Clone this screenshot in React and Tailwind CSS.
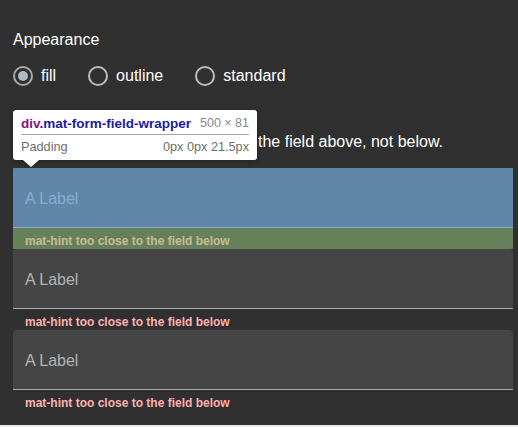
import React from "react";

function Radio({ label, checked }) {
  return (
    <div className="flex items-center">
      <div
        className={
          "w-[20px] h-[20px] rounded-full border-2 flex items-center justify-center " +
          (checked ? "border-[#a9a9a9]" : "border-[#bdbdbd]")
        }
      >
        {checked && <div className="w-[10px] h-[10px] rounded-full bg-[#aebcc6]" />}
      </div>
      <span className="ml-[8px] text-white text-[16px] leading-[20px]">{label}</span>
    </div>
  );
}

function Field({ highlighted }) {
  return (
    <div className="relative h-[81px] w-[500px]">
      <div className="h-[59px] bg-[#454545] rounded-t-[4px] px-[12px] pt-[3px] flex items-center">
        <span className="text-[16px] text-[#b3b3b3]">A Label</span>
      </div>
      <div className="h-px bg-[#ababab]" />
      <div className="h-[21px] px-[12px] pt-[6px]">
        <span className="block text-[12px] leading-[14px] font-bold text-[#ffb0b0]">
          mat-hint too close to the field below
        </span>
      </div>
      {highlighted && (
        <>
          <div className="absolute left-0 top-0 w-full h-[60px] bg-[rgba(111,168,220,0.66)]" />
          <div className="absolute left-0 top-[60px] w-full h-[21px] bg-[rgba(147,196,125,0.55)]" />
        </>
      )}
    </div>
  );
}

export default function App() {
  return (
    <div
      className="w-[518px] h-[427px] bg-[#303030] flex flex-col overflow-hidden"
      style={{ fontFamily: '"Liberation Sans", Arial, sans-serif' }}
    >
      <div className="relative flex-1 px-[13px] pt-[30px]">
        <div className="text-white text-[16px] leading-[20px]">Appearance</div>
        <div className="mt-[16px] flex items-center gap-[32px]">
          <Radio label="fill" checked />
          <Radio label="outline" />
          <Radio label="standard" />
        </div>
        <div className="mt-[46px] text-white text-[16px] leading-[20px] whitespace-nowrap flex">
          <span className="inline-block w-[245px] shrink-0" />
          <span>the field above, not below.</span>
        </div>
        <div className="mt-[16px] flex flex-col">
          <Field highlighted />
          <Field />
          <Field />
        </div>

        {/* DevTools tooltip */}
        <div className="absolute left-[13px] top-[110px] w-[244px] h-[50px] bg-white rounded-[3px] shadow-[0_1px_4px_rgba(0,0,0,0.35)] px-[8px] pt-[5px]">
          <div className="flex items-center justify-between h-[17px] leading-[17px]">
            <span className="font-bold text-[13.5px]">
              <span className="text-[#881280]">div</span>
              <span className="text-[#1a1aa6]">.mat-form-field-wrapper</span>
            </span>
            <span className="text-[#8a8a8a] text-[12.5px]">500 × 81</span>
          </div>
          <div className="mt-[2px] h-px bg-[#a6a6a6]" />
          <div className="mt-[4px] flex items-center justify-between h-[17px] text-[12.7px] leading-[17px] text-[#6e6e6e]">
            <span>Padding</span>
            <span>0px 0px 21.5px</span>
          </div>
          <div className="absolute left-[10px] top-[50px] w-0 h-0 border-l-[8px] border-r-[8px] border-t-[7px] border-l-transparent border-r-transparent border-t-white" />
        </div>
      </div>
      <div className="h-[2px] bg-[#ececec]" />
    </div>
  );
}
